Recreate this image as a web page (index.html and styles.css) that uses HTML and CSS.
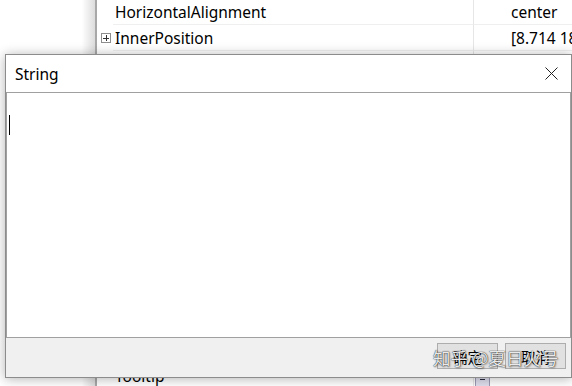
FILE: index.html
```html
<!DOCTYPE html>
<html lang="zh-CN">
<head>
<meta charset="UTF-8" />
<title>String</title>
<link rel="stylesheet" href="styles.css">
</head>
<body>

<!-- PROPERTY INSPECTOR (behind the dialog) -->
<div class="inspector">
  <div class="tree-pane"></div>
  <div class="props">
    <div class="row"><span class="expander"></span><span class="name">HorizontalAlignment</span><span class="value">center</span></div>
    <div class="row"><span class="expander"><i class="plus"></i></span><span class="name">InnerPosition</span><span class="value">[8.714 18.231 30 2.538]</span></div>
    <div class="row"><span class="expander"></span><span class="name">Interruptible</span><span class="value">on</span></div>
    <div class="row"><span class="expander"></span><span class="name">KeyPressFcn</span><span class="value"></span></div>
    <div class="row"><span class="expander"></span><span class="name">KeyReleaseFcn</span><span class="value"></span></div>
    <div class="row"><span class="expander"></span><span class="name">ListboxTop</span><span class="value">1.0</span></div>
    <div class="row"><span class="expander"></span><span class="name">Max</span><span class="value">1.0</span></div>
    <div class="row"><span class="expander"></span><span class="name">Min</span><span class="value">0.0</span></div>
    <div class="row"><span class="expander"><i class="plus"></i></span><span class="name">OuterPosition</span><span class="value">[8.714 18.231 30 2.538]</span></div>
    <div class="row"><span class="expander"><i class="plus"></i></span><span class="name">Position</span><span class="value">[8.714 18.231 30 2.538]</span></div>
    <div class="row"><span class="expander"><i class="plus"></i></span><span class="name">SliderStep</span><span class="value">[0.01 0.1]</span></div>
    <div class="row"><span class="expander"></span><span class="name">String</span><span class="value">Edit Text</span></div>
    <div class="row"><span class="expander"></span><span class="name">Style</span><span class="value">edit</span></div>
    <div class="row"><span class="expander"></span><span class="name">Tag</span><span class="value">edit1</span></div>
    <div class="row"><span class="expander"></span><span class="name">Tooltip</span><span class="value with-btn"><i class="edit-btn"></i></span></div>
  </div>
</div>

<!-- STRING DIALOG -->
<div class="dialog">
  <div class="titlebar">
    <span class="title">String</span>
    <svg class="close" width="13" height="13" viewBox="0 0 13 13">
      <path d="M0.5 0.5 L12.5 12.5 M12.5 0.5 L0.5 12.5" stroke="#222" stroke-width="1" fill="none"/>
    </svg>
  </div>
  <div class="editor"><span class="caret"></span></div>
  <div class="footer">
    <button class="btn">确定</button>
    <button class="btn">取消</button>
  </div>
  <div class="watermark">知乎 @夏日火号</div>
</div>

</body>
</html>
```

FILE: styles.css
```css
* {
  box-sizing: border-box;
  margin: 0;
  padding: 0;
}
html, body {
  height: 100%;
  overflow: hidden;
}
body {
  position: relative;
  font-family: "Noto Sans", "Noto Sans CJK SC", sans-serif;
  color: #000;
  background: #fff;
}

/* INSPECTOR */
.inspector {
  display: flex;
  height: 100%;
}
.tree-pane {
  width: 97px;
  flex: none;
  background: linear-gradient(to right, #fff 86%, #dcdcdc);
  border-right: 2px solid #a8a8a8;
}
.props {
  flex: 1;
  background: #fff;
}
.row {
  display: grid;
  grid-template-columns: 16px 361px 1fr;
  height: 26px;
  font-size: 15.5px;
  white-space: nowrap;
}
.row:first-child {
  height: 25px;
}
.expander {
  display: flex;
  align-items: center;
  justify-content: center;
  padding-left: 2px;
}
.plus {
  position: relative;
  width: 10px;
  height: 10px;
  border: 1px solid #8e8e8e;
  background: #fff;
}
.plus::before,
.plus::after {
  content: "";
  position: absolute;
  background: #333;
}
.plus::before { left: 1px; right: 1px; top: 3.5px; height: 1px; }
.plus::after { top: 1px; bottom: 1px; left: 3.5px; width: 1px; }
.name,
.value {
  display: flex;
  align-items: center;
  border-bottom: 1px solid #efefef;
  overflow: hidden;
}
.name {
  padding-left: 2px;
  border-right: 1px solid #e6e6e6;
}
.value {
  padding-left: 37px;
}
.value.with-btn {
  padding-left: 1px;
  align-items: flex-start;
  padding-top: 6px;
}
.edit-btn {
  position: relative;
  width: 15px;
  height: 18px;
  border: 1px solid #9a9ab4;
  background: #dedeee;
}
.edit-btn::before {
  content: "";
  position: absolute;
  left: 4px;
  right: 4px;
  top: 9px;
  height: 1px;
  background: #2a2a40;
}

/* DIALOG */
.dialog {
  position: absolute;
  left: 5px;
  top: 54px;
  width: 567px;
  height: 324px;
  display: flex;
  flex-direction: column;
  background: #f0f0f0;
  border: 1px solid #8c8c8c;
  box-shadow: 0 1px 11px rgba(0, 0, 0, 0.3);
}
.titlebar {
  height: 37px;
  flex: none;
  display: flex;
  align-items: center;
  justify-content: space-between;
  padding: 0 13px 0 9px;
  background: #fff;
}
.title {
  font-size: 15.5px;
}
.close {
  display: block;
}
.editor {
  height: 246px;
  flex: none;
  background: #fff;
  border: 1px solid #a0a0a0;
  padding: 22px 2px;
}
.caret {
  display: block;
  width: 1px;
  height: 20px;
  background: #000;
}
.footer {
  flex: 1;
  display: flex;
  justify-content: flex-end;
  align-items: flex-start;
  gap: 7px;
  padding: 5px 5px 0 0;
}
.btn {
  width: 61px;
  height: 26px;
  background: #e1e1e1;
  border: 1px solid #adadad;
  font-family: "Noto Sans CJK SC", sans-serif;
  font-size: 14.5px;
  color: #000;
}
.watermark {
  position: absolute;
  left: 427px;
  top: 291px;
  font-family: "Noto Sans CJK SC", sans-serif;
  font-size: 17.5px;
  line-height: 24px;
  color: rgba(255, 255, 255, 0.92);
  text-shadow:
    0 0 1px rgba(0, 0, 0, 0.7),
    0 0 1px rgba(0, 0, 0, 0.7),
    1px 1px 2px rgba(0, 0, 0, 0.35);
  pointer-events: none;
  white-space: nowrap;
}
```
